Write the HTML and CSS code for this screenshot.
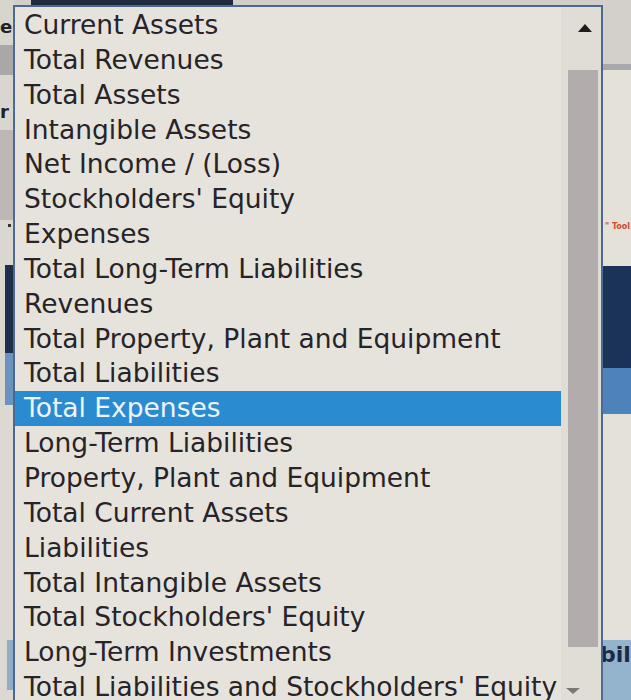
FILE: index.html
```html
<!DOCTYPE html>
<html>
<head>
<meta charset="utf-8">
<link rel="stylesheet" href="styles.css">
</head>
<body>
<div class="page">
  <div class="topstrip"><div class="topbar"></div></div>
  <div class="side left">
    <div class="blk l1"><span class="peek">e</span></div>
    <div class="blk l2"></div>
    <div class="blk l3"><span class="peek">r</span></div>
    <div class="blk l4"></div>
    <div class="blk l5"><span class="dot"></span></div>
    <div class="blk l6"></div>
    <div class="blk l7"></div>
    <div class="blk l8"></div>
    <div class="blk l9"></div>
  </div>
  <div class="side right">
    <div class="blk r1"></div>
    <div class="blk r2"></div>
    <div class="blk r3"><span class="tool">" Tool</span></div>
    <div class="blk r4"></div>
    <div class="blk r5"></div>
    <div class="blk r6"></div>
    <div class="blk r7"><span class="bil">bil</span></div>
  </div>
  <div class="dropdown">
    <ul class="list">
      <li>Current Assets</li>
      <li>Total Revenues</li>
      <li>Total Assets</li>
      <li>Intangible Assets</li>
      <li>Net Income / (Loss)</li>
      <li>Stockholders' Equity</li>
      <li>Expenses</li>
      <li>Total Long-Term Liabilities</li>
      <li>Revenues</li>
      <li>Total Property, Plant and Equipment</li>
      <li>Total Liabilities</li>
      <li class="selected">Total Expenses</li>
      <li>Long-Term Liabilities</li>
      <li>Property, Plant and Equipment</li>
      <li>Total Current Assets</li>
      <li>Liabilities</li>
      <li>Total Intangible Assets</li>
      <li>Total Stockholders' Equity</li>
      <li>Long-Term Investments</li>
      <li>Total Liabilities and Stockholders' Equity</li>
    </ul>
    <div class="scrollbar">
      <div class="arrow up"></div>
      <div class="thumb"></div>
      <div class="arrow down"></div>
    </div>
  </div>
</div>
</body>
</html>
```
FILE: styles.css
```css
html, body {
  margin: 0;
  padding: 0;
}
body {
  width: 631px;
  height: 700px;
  overflow: hidden;
  background: #dcd9d2;
  font-family: "DejaVu Sans", Verdana, sans-serif;
}
.page {
  position: relative;
  width: 631px;
  height: 700px;
  overflow: hidden;
}
.topstrip {
  position: absolute;
  left: 0;
  top: 0;
  width: 631px;
  height: 6px;
  background: #d2cfca;
}
.topbar {
  position: absolute;
  left: 31px;
  top: 0;
  width: 202px;
  height: 5px;
  background: #1f2c40;
}
.side {
  position: absolute;
  top: 0;
  height: 700px;
  display: flex;
  flex-direction: column;
  overflow: hidden;
}
.side.left {
  left: 0;
  width: 14px;
}
.side.right {
  left: 601px;
  width: 30px;
}
.blk {
  flex: none;
  position: relative;
}
.peek {
  position: absolute;
  left: 0;
  font-weight: bold;
  font-size: 18px;
  color: #222;
  line-height: 1;
}
.l1 { height: 45px; background: #d8d5cf; }
.l1 .peek { top: 18px; }
.l2 { height: 30px; background: #a9a7a7; }
.l3 { height: 55px; background: #d9d6d0; }
.l3 .peek { top: 28px; }
.l4 { height: 90px; background: #bbb8b6; }
.l5 { height: 45px; background: #dad7d0; }
.dot {
  position: absolute;
  left: 8px;
  top: 4px;
  width: 3px;
  height: 3px;
  background: #333;
}
.l6 { height: 88px; background: linear-gradient(90deg, #dad7d0 0 5px, #1d2f4c 5px); }
.l7 { height: 52px; background: linear-gradient(90deg, #dad7d0 0 5px, #6a93c0 5px); }
.l8 { height: 235px; background: #dcd9d2; }
.l9 { height: 50px; background: linear-gradient(90deg, #dcd9d2 0 7px, #8fadc8 7px); }

.r1 { height: 64px; background: #d3d0cb; }
.r2 { height: 6px; background: #a8a8ad; }
.r3 { height: 196px; background: #e4e1d9; }
.tool {
  position: absolute;
  left: 4px;
  top: 152px;
  font-size: 8px;
  font-weight: bold;
  color: #d24a2c;
  white-space: nowrap;
}
.r4 { height: 102px; background: #1b3357; }
.r5 { height: 46px; background: #4d82ba; }
.r6 { height: 226px; background: #e4e1d9; }
.r7 { height: 60px; background: #94b3cc; }
.bil {
  position: absolute;
  left: -1px;
  top: 4px;
  font-size: 22px;
  font-weight: bold;
  color: #1c2a44;
  line-height: 1;
}

.dropdown {
  position: absolute;
  left: 13px;
  top: 5px;
  width: 586px;
  height: 720px;
  border: 2px solid #4c6a90;
  background: #e6e3dc;
  display: flex;
}
.list {
  list-style: none;
  margin: 0;
  padding: 1px 0 0;
  flex: 1;
  min-width: 0;
}
.list li {
  height: 34.85px;
  line-height: 34.85px;
  padding-left: 9px;
  font-size: 26.5px;
  color: #262428;
  white-space: nowrap;
}
.list li.selected {
  background: #2b8bd0;
  color: #eef4fa;
}
.scrollbar {
  flex: none;
  width: 40px;
  position: relative;
  background: #e0ddd6;
}
.thumb {
  position: absolute;
  left: 7px;
  top: 63px;
  width: 30px;
  height: 577px;
  background: #b3acac;
}
.arrow {
  position: absolute;
  width: 0;
  height: 0;
  border-left: 7px solid transparent;
  border-right: 7px solid transparent;
}
.arrow.up {
  left: 17px;
  top: 17px;
  border-bottom: 8px solid #1f1c1c;
}
.arrow.down {
  left: 5px;
  top: 681px;
  border-top: 6px solid #7b7777;
}
```
